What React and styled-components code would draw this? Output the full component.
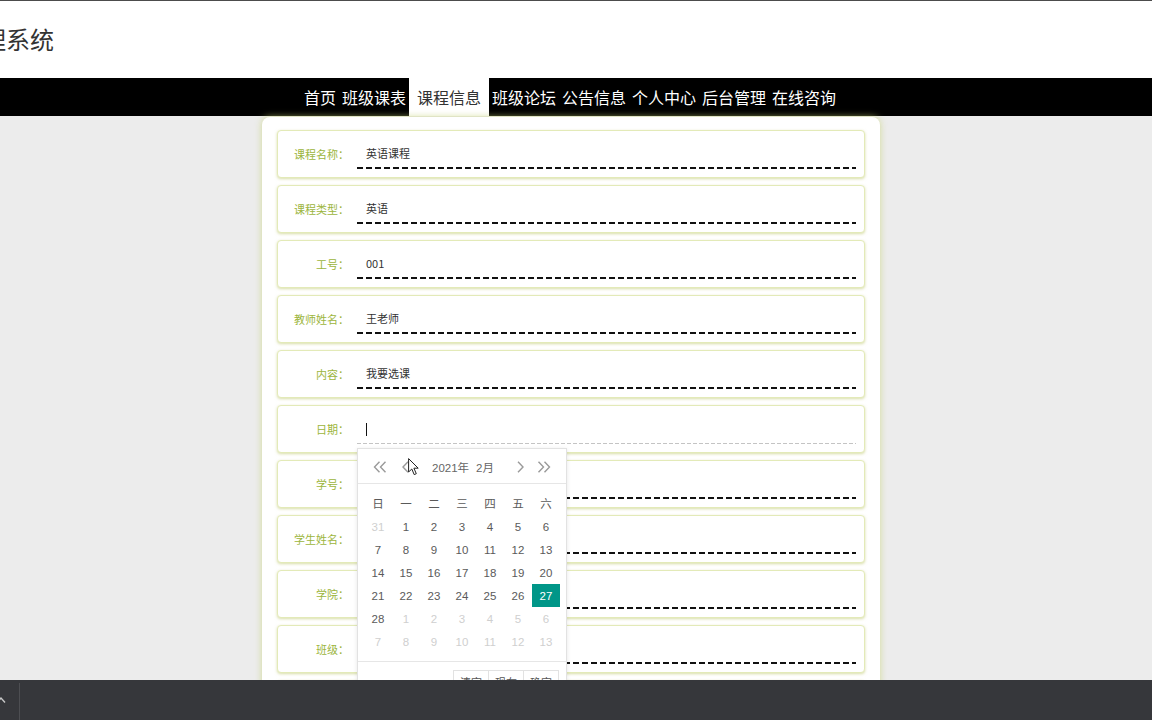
import React from "react";
import styled, { createGlobalStyle } from "styled-components";

const Global = createGlobalStyle`
  html, body { margin: 0; padding: 0; overflow: hidden; }
  body { font-family: "Noto Sans CJK SC", "Liberation Sans", sans-serif; }
  * { box-sizing: border-box; }
`;

const Page = styled.div`
  width: 1152px;
  height: 720px;
  display: flex;
  flex-direction: column;
  overflow: hidden;
`;

const Viewport = styled.div`
  flex: 1;
  overflow: hidden;
  background: #ececec;
`;

const Header = styled.header`
  height: 78px;
  border-top: 1px solid #4c4c4c;
  background: #fff;
  display: flex;
  align-items: center;
  padding-bottom: 2px;
  overflow: hidden;
`;

const Title = styled.h1`
  margin: 0 0 0 -18px;
  font-size: 24px;
  font-weight: 400;
  color: #333;
  white-space: nowrap;
`;

const Nav = styled.nav`
  height: 38px;
  background: #000;
  display: flex;
  justify-content: center;
  padding-right: 12px;
`;

const NavItem = styled.a`
  display: block;
  height: 38px;
  line-height: 38px;
  padding: 0 ${(p) => (p.$active ? "8px" : "3px")};
  font-size: 16px;
  color: ${(p) => (p.$active ? "#333" : "#fff")};
  background: ${(p) => (p.$active ? "#fff" : "transparent")};
  text-decoration: none;
  white-space: nowrap;
`;

const Wrap = styled.div`
  display: flex;
  justify-content: center;
  padding-right: 10px;
`;

const Panel = styled.div`
  width: 618px;
  margin-top: 1px;
  background: #fff;
  border-radius: 8px;
  box-shadow: 0 0 7px rgba(200, 212, 120, 0.75);
  padding: 13px 15px;
`;

const Card = styled.div`
  display: flex;
  align-items: center;
  padding: 8px 8px 8px 0;
  margin-bottom: 7px;
  border: 1px solid #e3eab8;
  border-radius: 4px;
  background: #fff;
  box-shadow: 0 1px 3px rgba(190, 200, 110, 0.6);
`;

const Label = styled.label`
  width: 71px;
  margin-right: 8px;
  text-align: right;
  font-size: 11px;
  color: #9cb53c;
  white-space: nowrap;
`;

const Field = styled.div`
  position: relative;
  flex: 1;
  height: 30px;
  line-height: 28px;
  padding-left: 9px;
  font-size: 11px;
  color: #333;
  background-image: linear-gradient(
    to right,
    ${(p) => (p.$focus ? "#c4c4c4" : "#111")} 62%,
    transparent 0
  );
  background-position: left bottom;
  background-size: ${(p) => (p.$focus ? "6px 1px" : "9px 2px")};
  background-repeat: repeat-x;
`;

const Caret = styled.span`
  display: inline-block;
  width: 1px;
  height: 13px;
  background: #111;
  vertical-align: middle;
  margin-top: -2px;
`;

const Picker = styled.div`
  position: absolute;
  left: 0;
  top: calc(100% + 4px);
  width: 210px;
  background: #fff;
  border: 1px solid #e2e2e2;
  box-shadow: 0 1px 4px rgba(0, 0, 0, 0.1);
  z-index: 5;
  font-family: "Liberation Sans", "Noto Sans CJK SC", sans-serif;
  line-height: normal;
`;

const PickerHead = styled.div`
  position: relative;
  height: 35px;
  border-bottom: 1px solid #e6e6e6;
  display: flex;
  align-items: center;
  padding: 2px 15px 0;
`;

const ArrowGroup = styled.div`
  display: flex;
  align-items: center;
  gap: ${(p) => p.$gap}px;
`;

const HeadTitle = styled.div`
  flex: 1;
  display: flex;
  justify-content: center;
  gap: 7px;
  font-size: 11.5px;
  color: #666;
`;

const Body = styled.div`
  padding: 8px 6px 8px;
  display: grid;
  grid-template-columns: repeat(7, 28px);
  grid-auto-rows: 23px;
`;

const Cell = styled.div`
  text-align: center;
  line-height: 25px;
  font-size: 11.5px;
  color: ${(p) => (p.$sel ? "#fff" : p.$other ? "#cfcfcf" : "#5a5a5a")};
  background: ${(p) => (p.$sel ? "#009688" : "transparent")};
`;

const Foot = styled.div`
  border-top: 1px solid #e6e6e6;
  padding: 8px 7px;
  display: flex;
  justify-content: flex-end;
`;

const FootBtn = styled.span`
  display: inline-block;
  height: 26px;
  line-height: 24px;
  padding: 0 6px;
  border: 1px solid #e2e2e2;
  margin-left: -1px;
  font-size: 11px;
  color: #555;
`;

const Cursor = styled.svg`
  position: absolute;
  left: 50px;
  top: 9px;
`;

const Taskbar = styled.div`
  height: 40px;
  background: #36373b;
  display: flex;
  align-items: stretch;
`;

const Chevron = styled.svg`
  margin: 16px 0 0 -4px;
`;

const Separator = styled.div`
  width: 1px;
  margin: 3px 0 0 13px;
  background: #4d4e52;
`;

const navItems = ["首页", "班级课表", "课程信息", "班级论坛", "公告信息", "个人中心", "后台管理", "在线咨询"];

const rows = [
  ["课程名称：", "英语课程"],
  ["课程类型：", "英语"],
  ["工号：", "001"],
  ["教师姓名：", "王老师"],
  ["内容：", "我要选课"],
  ["日期：", null],
  ["学号：", ""],
  ["学生姓名：", ""],
  ["学院：", ""],
  ["班级：", ""],
  ["", ""],
];

const weekdays = ["日", "一", "二", "三", "四", "五", "六"];

const days = [];
days.push({ d: 31, o: true });
for (let i = 1; i <= 28; i++) days.push({ d: i, s: i === 27 });
for (let i = 1; i <= 13; i++) days.push({ d: i, o: true });

const DoubleLeft = () => (
  <svg width="14" height="12" viewBox="0 0 14 12" fill="none" stroke="#9a9a9a" strokeWidth="1.4">
    <path d="M6.5 0.8 L1.5 6 L6.5 11.2 M12.5 0.8 L7.5 6 L12.5 11.2" />
  </svg>
);
const SingleLeft = () => (
  <svg width="7" height="12" viewBox="0 0 7 12" fill="none" stroke="#9a9a9a" strokeWidth="1.4">
    <path d="M6 0.8 L1 6 L6 11.2" />
  </svg>
);
const SingleRight = () => (
  <svg width="7" height="12" viewBox="0 0 7 12" fill="none" stroke="#9a9a9a" strokeWidth="1.4">
    <path d="M1 0.8 L6 6 L1 11.2" />
  </svg>
);
const DoubleRight = () => (
  <svg width="14" height="12" viewBox="0 0 14 12" fill="none" stroke="#9a9a9a" strokeWidth="1.4">
    <path d="M1.5 0.8 L6.5 6 L1.5 11.2 M7.5 0.8 L12.5 6 L7.5 11.2" />
  </svg>
);

const DatePicker = () => (
  <Picker>
    <PickerHead>
      <ArrowGroup $gap={15}>
        <DoubleLeft />
        <SingleLeft />
      </ArrowGroup>
      <HeadTitle>
        <span>2021年</span>
        <span>2月</span>
      </HeadTitle>
      <ArrowGroup $gap={13}>
        <SingleRight />
        <DoubleRight />
      </ArrowGroup>
      <Cursor width="12" height="18" viewBox="0 0 12 18">
        <path
          d="M0.6 0.6 L0.6 14 L3.8 11 L6.2 16.6 L8.3 15.7 L5.9 10.2 L10.2 10.2 Z"
          fill="#fff"
          stroke="#222"
          strokeWidth="1"
          strokeLinejoin="round"
        />
      </Cursor>
    </PickerHead>
    <Body>
      {weekdays.map((w) => (
        <Cell key={w}>{w}</Cell>
      ))}
      {days.map((x, i) => (
        <Cell key={i} $other={x.o} $sel={x.s}>
          {x.d}
        </Cell>
      ))}
    </Body>
    <Foot>
      <FootBtn>清空</FootBtn>
      <FootBtn>现在</FootBtn>
      <FootBtn>确定</FootBtn>
    </Foot>
  </Picker>
);

export default function App() {
  return (
    <Page>
      <Global />
      <Viewport>
        <Header>
          <Title>理系统</Title>
        </Header>
        <Nav>
          {navItems.map((n) => (
            <NavItem key={n} $active={n === "课程信息"}>
              {n}
            </NavItem>
          ))}
        </Nav>
        <Wrap>
          <Panel>
            {rows.map(([label, value], i) => (
              <Card key={i}>
                <Label>{label}</Label>
                {value === null ? (
                  <Field $focus>
                    <Caret />
                    <DatePicker />
                  </Field>
                ) : (
                  <Field>{value}</Field>
                )}
              </Card>
            ))}
          </Panel>
        </Wrap>
      </Viewport>
      <Taskbar>
        <Chevron width="10" height="8" viewBox="0 0 10 8" fill="none" stroke="#c8c8c8" strokeWidth="1.4">
          <path d="M1 6.5 L5 2 L9 6.5" />
        </Chevron>
        <Separator />
      </Taskbar>
    </Page>
  );
}
